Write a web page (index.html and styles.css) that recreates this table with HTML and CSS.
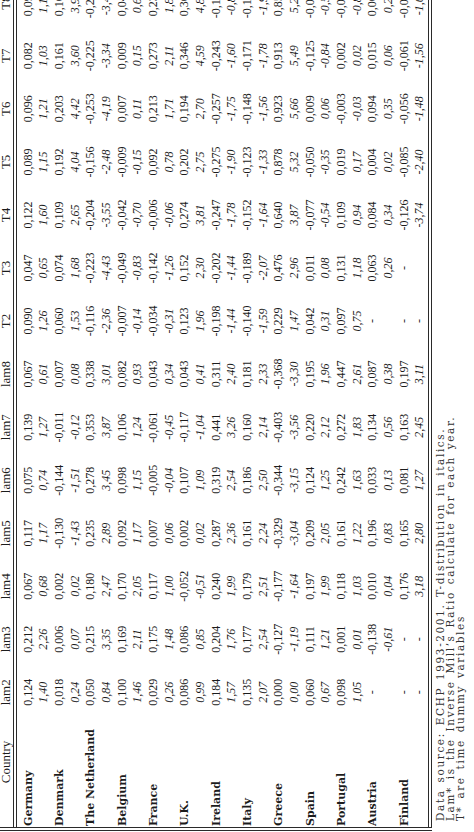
FILE: index.html
```html
<!DOCTYPE html>
<html lang="en">
<head>
<meta charset="utf-8">
<title>Table</title>
<link rel="stylesheet" href="styles.css">
</head>
<body>
<div class="sheet">
<table class="tbl">
<colgroup><col class="cc"><col><col><col><col><col><col><col><col><col><col><col><col><col><col></colgroup>
<thead>
<tr><th class="hc">Country</th><th>lam2</th><th>lam3</th><th>lam4</th><th>lam5</th><th>lam6</th><th>lam7</th><th>lam8</th><th>T2</th><th>T3</th><th>T4</th><th>T5</th><th>T6</th><th>T7</th><th>T8</th></tr>
</thead>
<tbody>
<tr class="c first"><td class="ctry">Germany</td><td>0,124</td><td>0,212</td><td>0,067</td><td>0,117</td><td>0,075</td><td>0,139</td><td>0,067</td><td>0,090</td><td>0,047</td><td>0,122</td><td>0,089</td><td>0,096</td><td>0,082</td><td>0,092</td></tr>
<tr class="t"><td class="ctry"></td><td>1,40</td><td>2,26</td><td>0,68</td><td>1,17</td><td>0,74</td><td>1,27</td><td>0,61</td><td>1,26</td><td>0,65</td><td>1,60</td><td>1,15</td><td>1,21</td><td>1,03</td><td>1,12</td></tr>
<tr class="c"><td class="ctry">Denmark</td><td>0,018</td><td>0,006</td><td>0,002</td><td>-0,130</td><td>-0,144</td><td>-0,011</td><td>0,007</td><td>0,060</td><td>0,074</td><td>0,109</td><td>0,192</td><td>0,203</td><td>0,161</td><td>0,168</td></tr>
<tr class="t"><td class="ctry"></td><td>0,24</td><td>0,07</td><td>0,02</td><td>-1,43</td><td>-1,51</td><td>-0,12</td><td>0,08</td><td>1,53</td><td>1,68</td><td>2,65</td><td>4,04</td><td>4,42</td><td>3,60</td><td>3,95</td></tr>
<tr class="c"><td class="ctry">The Netherland</td><td>0,050</td><td>0,215</td><td>0,180</td><td>0,235</td><td>0,278</td><td>0,353</td><td>0,338</td><td>-0,116</td><td>-0,223</td><td>-0,204</td><td>-0,156</td><td>-0,253</td><td>-0,225</td><td>-0,251</td></tr>
<tr class="t"><td class="ctry"></td><td>0,84</td><td>3,35</td><td>2,47</td><td>2,89</td><td>3,45</td><td>3,87</td><td>3,01</td><td>-2,36</td><td>-4,43</td><td>-3,55</td><td>-2,48</td><td>-4,19</td><td>-3,34</td><td>-3,40</td></tr>
<tr class="c"><td class="ctry">Belgium</td><td>0,100</td><td>0,169</td><td>0,170</td><td>0,092</td><td>0,098</td><td>0,106</td><td>0,082</td><td>-0,007</td><td>-0,049</td><td>-0,042</td><td>-0,009</td><td>0,007</td><td>0,009</td><td>0,043</td></tr>
<tr class="t"><td class="ctry"></td><td>1,46</td><td>2,11</td><td>2,05</td><td>1,17</td><td>1,15</td><td>1,24</td><td>0,93</td><td>-0,14</td><td>-0,83</td><td>-0,70</td><td>-0,15</td><td>0,11</td><td>0,15</td><td>0,69</td></tr>
<tr class="c"><td class="ctry">France</td><td>0,029</td><td>0,175</td><td>0,117</td><td>0,007</td><td>-0,005</td><td>-0,061</td><td>0,043</td><td>-0,034</td><td>-0,142</td><td>-0,006</td><td>0,092</td><td>0,213</td><td>0,273</td><td>0,231</td></tr>
<tr class="t"><td class="ctry"></td><td>0,26</td><td>1,48</td><td>1,00</td><td>0,06</td><td>-0,04</td><td>-0,45</td><td>0,34</td><td>-0,31</td><td>-1,26</td><td>-0,06</td><td>0,78</td><td>1,71</td><td>2,11</td><td>1,80</td></tr>
<tr class="c"><td class="ctry">U.K.</td><td>0,086</td><td>0,086</td><td>-0,052</td><td>0,002</td><td>0,107</td><td>-0,117</td><td>0,043</td><td>0,123</td><td>0,152</td><td>0,274</td><td>0,202</td><td>0,194</td><td>0,346</td><td>0,364</td></tr>
<tr class="t"><td class="ctry"></td><td>0,99</td><td>0,85</td><td>-0,51</td><td>0,02</td><td>1,09</td><td>-1,04</td><td>0,41</td><td>1,96</td><td>2,30</td><td>3,81</td><td>2,75</td><td>2,70</td><td>4,59</td><td>4,84</td></tr>
<tr class="c"><td class="ctry">Ireland</td><td>0,184</td><td>0,204</td><td>0,240</td><td>0,287</td><td>0,319</td><td>0,441</td><td>0,311</td><td>-0,198</td><td>-0,202</td><td>-0,247</td><td>-0,275</td><td>-0,257</td><td>-0,243</td><td>-0,121</td></tr>
<tr class="t"><td class="ctry"></td><td>1,57</td><td>1,76</td><td>1,99</td><td>2,36</td><td>2,54</td><td>3,26</td><td>2,40</td><td>-1,44</td><td>-1,44</td><td>-1,78</td><td>-1,90</td><td>-1,75</td><td>-1,60</td><td>-0,86</td></tr>
<tr class="c"><td class="ctry">Italy</td><td>0,135</td><td>0,177</td><td>0,179</td><td>0,161</td><td>0,186</td><td>0,160</td><td>0,181</td><td>-0,140</td><td>-0,189</td><td>-0,152</td><td>-0,123</td><td>-0,148</td><td>-0,171</td><td>-0,191</td></tr>
<tr class="t"><td class="ctry"></td><td>2,07</td><td>2,54</td><td>2,51</td><td>2,24</td><td>2,50</td><td>2,14</td><td>2,33</td><td>-1,59</td><td>-2,07</td><td>-1,64</td><td>-1,33</td><td>-1,56</td><td>-1,78</td><td>-1,98</td></tr>
<tr class="c"><td class="ctry">Greece</td><td>0,000</td><td>-0,127</td><td>-0,177</td><td>-0,329</td><td>-0,344</td><td>-0,403</td><td>-0,368</td><td>0,229</td><td>0,476</td><td>0,640</td><td>0,878</td><td>0,923</td><td>0,913</td><td>0,850</td></tr>
<tr class="t"><td class="ctry"></td><td>0,00</td><td>-1,19</td><td>-1,64</td><td>-3,04</td><td>-3,15</td><td>-3,56</td><td>-3,30</td><td>1,47</td><td>2,96</td><td>3,87</td><td>5,32</td><td>5,66</td><td>5,49</td><td>5,24</td></tr>
<tr class="c"><td class="ctry">Spain</td><td>0,060</td><td>0,111</td><td>0,197</td><td>0,209</td><td>0,124</td><td>0,220</td><td>0,195</td><td>0,042</td><td>0,011</td><td>-0,077</td><td>-0,050</td><td>0,009</td><td>-0,125</td><td>-0,076</td></tr>
<tr class="t"><td class="ctry"></td><td>0,67</td><td>1,21</td><td>1,99</td><td>2,05</td><td>1,25</td><td>2,12</td><td>1,96</td><td>0,31</td><td>0,08</td><td>-0,54</td><td>-0,35</td><td>0,06</td><td>-0,84</td><td>-0,51</td></tr>
<tr class="c"><td class="ctry">Portugal</td><td>0,098</td><td>0,001</td><td>0,118</td><td>0,161</td><td>0,242</td><td>0,272</td><td>0,447</td><td>0,097</td><td>0,131</td><td>0,109</td><td>0,019</td><td>-0,003</td><td>0,002</td><td>-0,088</td></tr>
<tr class="t"><td class="ctry"></td><td>1,05</td><td>0,01</td><td>1,03</td><td>1,22</td><td>1,63</td><td>1,83</td><td>2,61</td><td>0,75</td><td>1,18</td><td>0,94</td><td>0,17</td><td>-0,03</td><td>0,02</td><td>-0,81</td></tr>
<tr class="c"><td class="ctry">Austria</td><td>-</td><td>-0,138</td><td>0,010</td><td>0,196</td><td>0,033</td><td>0,134</td><td>0,087</td><td>-</td><td>0,063</td><td>0,084</td><td>0,004</td><td>0,094</td><td>0,015</td><td>0,066</td></tr>
<tr class="t"><td class="ctry"></td><td></td><td>-0,61</td><td>0,04</td><td>0,83</td><td>0,13</td><td>0,56</td><td>0,38</td><td></td><td>0,26</td><td>0,34</td><td>0,02</td><td>0,35</td><td>0,06</td><td>0,25</td></tr>
<tr class="c"><td class="ctry">Finland</td><td>-</td><td>-</td><td>0,176</td><td>0,165</td><td>0,081</td><td>0,163</td><td>0,197</td><td>-</td><td>-</td><td>-0,126</td><td>-0,085</td><td>-0,056</td><td>-0,061</td><td>-0,063</td></tr>
<tr class="t last"><td class="ctry"></td><td class="up">-</td><td class="up">-</td><td>3,18</td><td>2,80</td><td>1,27</td><td>2,45</td><td>3,11</td><td class="up">-</td><td></td><td>-3,74</td><td>-2,40</td><td>-1,48</td><td>-1,56</td><td>-1,64</td></tr>
</tbody>
</table>
<div class="notes">
<div>Data source: ECHP 1993-2001. T-distribution in italics.</div>
<div>Lam* is the Inverse Mill’s Ratio calculate for each year.</div>
<div>T* are time dummy variables</div>
</div>
</div>
</body>
</html>
```

FILE: styles.css
```css
html, body {
  margin: 0;
  padding: 0;
  overflow: hidden;
  background: #ffffff;
}

body {
  width: 474px;
  height: 832px;
  color: #1c1c1c;
  font-family: "Liberation Serif", "DejaVu Serif", serif;
}

.sheet {
  width: 900px;
  padding-left: 1px;
  transform-origin: 0 0;
  transform: translate(-2px, 832px) rotate(-90deg);
}

.tbl {
  table-layout: fixed;
  width: 855px;
  border-collapse: separate;
  border-spacing: 0;
  border-top: 1px solid #2a2a2a;
  border-left: 4px double #2a2a2a;
}

.tbl col {
  width: 53px;
}

.tbl col.cc {
  width: 108px;
}

.tbl th {
  font-weight: normal;
  font-size: 13px;
  line-height: 12px;
  padding: 1px 0 1px;
  text-align: center;
  white-space: nowrap;
  border-bottom: 4px double #2a2a2a;
}

.tbl th.hc {
  padding-left: 22px;
}

.tbl td {
  font-size: 12px;
  line-height: 15.67px;
  padding: 0;
  text-align: center;
  white-space: nowrap;
  vertical-align: middle;
}

.tbl tr.first td {
  padding-top: 3.5px;
}

.tbl tr.t td {
  font-style: italic;
}

.tbl tr.t td.up {
  font-style: normal;
}

.tbl tr.last td {
  border-bottom: 4px double #2a2a2a;
}

.tbl td.ctry {
  text-align: left;
  padding-left: 1px;
  font-family: "DejaVu Serif", serif;
  font-weight: bold;
  font-style: normal;
  font-size: 11px;
}

.notes {
  margin-top: 3px;
  padding-left: 10px;
  font-family: "DejaVu Serif", serif;
  font-size: 10.5px;
  line-height: 10px;
  letter-spacing: 1.6px;
  word-spacing: 2px;
  color: #333333;
  white-space: nowrap;
}
```
